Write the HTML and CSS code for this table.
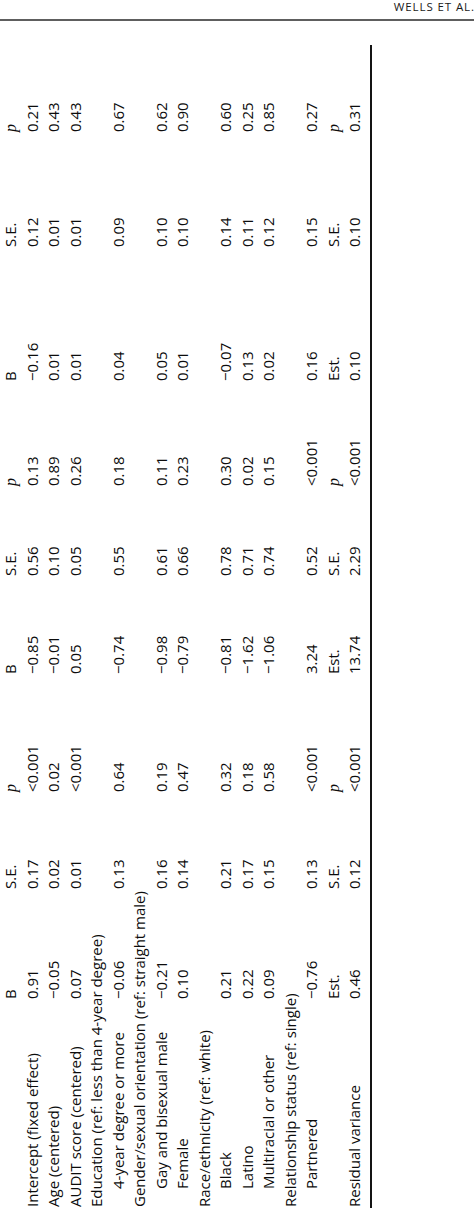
FILE: index.html
```html
<!DOCTYPE html>
<html lang="en">
<head>
<meta charset="utf-8">
<title>Wells et al. – Table</title>
<link rel="stylesheet" href="styles.css">
</head>
<body>
<div class="page">
  <header class="running-head"><span class="running-title">WELLS ET AL.</span></header>
  <div class="stage">
    <div class="rotated">
      <div class="table">
        <div class="lbl"></div>
        <div class="c hd">B</div><div class="c">S.E.</div><div class="c p">p</div>
        <div class="c hd">B</div><div class="c">S.E.</div><div class="c p">p</div>
        <div class="c hd">B</div><div class="c">S.E.</div><div class="c p">p</div>

        <div class="lbl">Intercept (fixed effect)</div>
        <div class="c">0.91</div><div class="c">0.17</div><div class="c">&lt;0.001</div>
        <div class="c">−0.85</div><div class="c">0.56</div><div class="c">0.13</div>
        <div class="c">−0.16</div><div class="c">0.12</div><div class="c">0.21</div>

        <div class="lbl">Age (centered)</div>
        <div class="c">−0.05</div><div class="c">0.02</div><div class="c">0.02</div>
        <div class="c">−0.01</div><div class="c">0.10</div><div class="c">0.89</div>
        <div class="c">0.01</div><div class="c">0.01</div><div class="c">0.43</div>

        <div class="lbl">AUDIT score (centered)</div>
        <div class="c">0.07</div><div class="c">0.01</div><div class="c">&lt;0.001</div>
        <div class="c">0.05</div><div class="c">0.05</div><div class="c">0.26</div>
        <div class="c">0.01</div><div class="c">0.01</div><div class="c">0.43</div>

        <div class="lbl sec">Education (ref: less than 4-year degree)</div>

        <div class="lbl ind">4-year degree or more</div>
        <div class="c">−0.06</div><div class="c">0.13</div><div class="c">0.64</div>
        <div class="c">−0.74</div><div class="c">0.55</div><div class="c">0.18</div>
        <div class="c">0.04</div><div class="c">0.09</div><div class="c">0.67</div>

        <div class="lbl sec">Gender/sexual orientation (ref: straight male)</div>

        <div class="lbl ind">Gay and bisexual male</div>
        <div class="c">−0.21</div><div class="c">0.16</div><div class="c">0.19</div>
        <div class="c">−0.98</div><div class="c">0.61</div><div class="c">0.11</div>
        <div class="c">0.05</div><div class="c">0.10</div><div class="c">0.62</div>

        <div class="lbl ind">Female</div>
        <div class="c">0.10</div><div class="c">0.14</div><div class="c">0.47</div>
        <div class="c">−0.79</div><div class="c">0.66</div><div class="c">0.23</div>
        <div class="c">0.01</div><div class="c">0.10</div><div class="c">0.90</div>

        <div class="lbl sec">Race/ethnicity (ref: white)</div>

        <div class="lbl ind">Black</div>
        <div class="c">0.21</div><div class="c">0.21</div><div class="c">0.32</div>
        <div class="c">−0.81</div><div class="c">0.78</div><div class="c">0.30</div>
        <div class="c">−0.07</div><div class="c">0.14</div><div class="c">0.60</div>

        <div class="lbl ind">Latino</div>
        <div class="c">0.22</div><div class="c">0.17</div><div class="c">0.18</div>
        <div class="c">−1.62</div><div class="c">0.71</div><div class="c">0.02</div>
        <div class="c">0.13</div><div class="c">0.11</div><div class="c">0.25</div>

        <div class="lbl ind">Multiracial or other</div>
        <div class="c">0.09</div><div class="c">0.15</div><div class="c">0.58</div>
        <div class="c">−1.06</div><div class="c">0.74</div><div class="c">0.15</div>
        <div class="c">0.02</div><div class="c">0.12</div><div class="c">0.85</div>

        <div class="lbl sec">Relationship status (ref: single)</div>

        <div class="lbl ind">Partnered</div>
        <div class="c">−0.76</div><div class="c">0.13</div><div class="c">&lt;0.001</div>
        <div class="c">3.24</div><div class="c">0.52</div><div class="c">&lt;0.001</div>
        <div class="c">0.16</div><div class="c">0.15</div><div class="c">0.27</div>

        <div class="lbl"></div>
        <div class="c">Est.</div><div class="c">S.E.</div><div class="c p">p</div>
        <div class="c">Est.</div><div class="c">S.E.</div><div class="c p">p</div>
        <div class="c">Est.</div><div class="c">S.E.</div><div class="c p">p</div>

        <div class="lbl">Residual variance</div>
        <div class="c">0.46</div><div class="c">0.12</div><div class="c">&lt;0.001</div>
        <div class="c">13.74</div><div class="c">2.29</div><div class="c">&lt;0.001</div>
        <div class="c">0.10</div><div class="c">0.10</div><div class="c">0.31</div>
      </div>
    </div>
  </div>
</div>
</body>
</html>
```
FILE: styles.css
```css
html, body {
  margin: 0;
  padding: 0;
  background: #ffffff;
}

body {
  overflow: hidden;
  color: #0c0c0c;
  font-family: "Open Sans", "Liberation Sans", Arial, sans-serif;
}

.page {
  width: 474px;
  height: 1209px;
  overflow: hidden;
}

.running-head {
  height: 19px;
  border-bottom: 2px solid #5e5e5e;
  display: flex;
  justify-content: flex-end;
  align-items: flex-start;
}

.running-title {
  font-size: 11.5px;
  line-height: 14px;
  letter-spacing: 0.9px;
  margin-right: -0.9px;
  color: #1a1a1a;
}

.stage {
  height: 1188px;
}

.rotated {
  width: 1188px;
  height: 474px;
  transform-origin: 0 0;
  transform: translateY(1188px) rotate(-90deg);
}

.table {
  width: 1163px;
  display: grid;
  grid-template-columns: 209px 110px 97px 118px 98px 90px 105px 134px 115px 87px;
  grid-auto-rows: 21.5px;
  margin-top: -1px;
  padding-bottom: 4.5px;
  border-bottom: 2px solid #141414;
  font-size: 15px;
  line-height: 21.5px;
}

.lbl,
.c {
  white-space: nowrap;
}

.lbl {
  padding-left: 1px;
}

.lbl.sec {
  grid-column: 1 / -1;
}

.lbl.ind {
  padding-left: 19px;
}

.c.p {
  font-family: "Liberation Serif", "Times New Roman", serif;
  font-style: italic;
  font-size: 16px;
}
```
